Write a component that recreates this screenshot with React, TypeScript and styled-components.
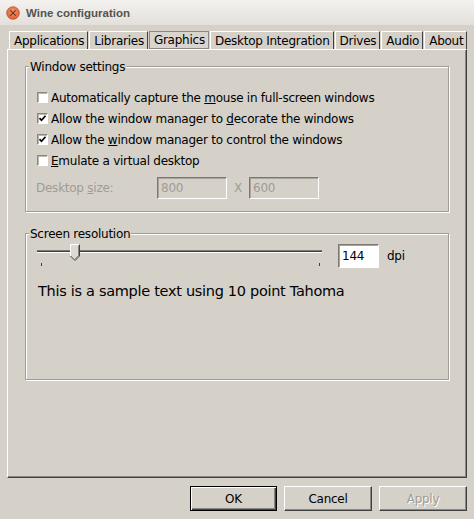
import React from "react";
import styled, { createGlobalStyle, css } from "styled-components";

const FONT = `"DejaVu Sans", "Liberation Sans", sans-serif`;
const BG = "#d5d1c9";

const GlobalStyle = createGlobalStyle`
  html, body { margin: 0; padding: 0; background: ${BG}; }
  body { font-family: ${FONT}; font-size: 12px; letter-spacing: -0.25px; color: #000; }
  * { box-sizing: border-box; }
`;

const Window = styled.div`
  width: 474px;
  height: 519px;
  display: flex;
  flex-direction: column;
  background: ${BG};
  overflow: hidden;
`;

const TitleBar = styled.div`
  height: 25px;
  flex: none;
  display: flex;
  align-items: center;
  padding-left: 6px;
  gap: 6px;
  background: linear-gradient(#f3f2ef, #e3e0da);
`;

const TitleText = styled.span`
  font-family: "Liberation Sans", sans-serif;
  font-weight: bold;
  font-size: 11.5px;
  letter-spacing: 0;
  color: #55534e;
`;

const Content = styled.div`
  padding: 6px 7px 0 7px;
  display: flex;
  flex-direction: column;
`;

const TabStrip = styled.div`
  display: flex;
  height: 18px;
  padding-left: 2px;
`;

const Tab = styled.div<{ $active?: boolean }>`
  display: flex;
  align-items: center;
  padding: 0 3px 0 4px;
  margin-right: 1px;
  white-space: nowrap;
  border-top: 1px solid #fff;
  border-left: 1px solid #fff;
  border-right: 1px solid #404040;
  ${(p) =>
    p.$active &&
    css`
      border: 1px solid #8c8981;
      background: #d9d5ce;
    `}
`;

const Panel = styled.div`
  height: 429px;
  border: 1px solid;
  border-color: #fff #404040 #404040 #fff;
  box-shadow: inset -1px -1px 0 #8a877f;
  padding: 16px 17px 0 17px;
  display: flex;
  flex-direction: column;
  gap: 21px;
`;

const Group = styled.div<{ $h: number; $pt: number }>`
  position: relative;
  height: ${(p) => p.$h}px;
  border: 1px solid #a19d95;
  box-shadow: inset 1px 1px 0 #fff, 1px 1px 0 #fff;
  padding-top: ${(p) => p.$pt}px;
  display: flex;
  flex-direction: column;
`;

const Legend = styled.span`
  position: absolute;
  top: -7px;
  left: 3px;
  padding: 0 1px;
  line-height: 14px;
  background: ${BG};
`;

const CheckRow = styled.label`
  height: 21px;
  display: flex;
  align-items: center;
  padding-left: 11px;
  gap: 3px;
  white-space: nowrap;
`;

const Box = styled.span`
  width: 11px;
  height: 11px;
  flex: none;
  background: #fff;
  border: 1px solid;
  border-color: #8a877f #fff #fff #8a877f;
  box-shadow: inset 1px 1px 0 #b9b6ae;
  display: flex;
  align-items: center;
  justify-content: center;
`;

const Key = styled.span`
  text-decoration: underline;
`;

const SizeRow = styled.div`
  margin-top: 6px;
  height: 22px;
  display: flex;
  align-items: center;
  padding-left: 10px;
  color: #9f9c94;
`;

const SizeLabel = styled.span`
  width: 121px;
`;

const Field = styled.div<{ $w: number; $white?: boolean }>`
  width: ${(p) => p.$w}px;
  height: ${(p) => (p.$white ? 24 : 22)}px;
  border: 1px solid;
  border-color: #7b7870 #fff #fff #7b7870;
  box-shadow: inset 1px 1px 0 #a8a59d;
  background: ${(p) => (p.$white ? "#fff" : BG)};
  color: ${(p) => (p.$white ? "#000" : "#9f9c94")};
  padding-left: 3px;
  display: flex;
  align-items: center;
`;

const Times = styled.span`
  width: 22px;
  text-align: center;
`;

const SliderRow = styled.div`
  height: 26px;
  display: flex;
  align-items: center;
  padding-left: 9px;
`;

const SliderSvg = styled.svg`
  flex: none;
  margin-right: 13px;
`;

const Unit = styled.span`
  margin-left: 8px;
`;

const Sample = styled.div`
  margin-top: 12px;
  padding-left: 12px;
  line-height: 20px;
  font-size: 14.5px;
  letter-spacing: -0.3px;
`;

const Footer = styled.div`
  margin-top: 8px;
  display: flex;
  justify-content: flex-end;
  gap: 7px;
`;

const Button = styled.div<{ $default?: boolean; $disabled?: boolean }>`
  width: ${(p) => (p.$default ? 87 : 88)}px;
  height: 25px;
  display: flex;
  align-items: center;
  justify-content: center;
  border: 1px solid;
  border-color: #fff #404040 #404040 #fff;
  box-shadow: inset -1px -1px 0 #8a877f;
  ${(p) =>
    p.$default &&
    css`
      border: 1px solid #000;
      box-shadow: inset 1px 1px 0 #fff, inset -1px -1px 0 #404040,
        inset -2px -2px 0 #8a877f;
    `}
  ${(p) =>
    p.$disabled &&
    css`
      color: #a09d95;
      text-shadow: 1px 1px 0 #fff;
    `}
`;

const CloseIcon = () => (
  <svg width="14" height="14" viewBox="0 0 14 14">
    <defs>
      <radialGradient id="cg" cx="50%" cy="40%" r="60%">
        <stop offset="0%" stopColor="#f59a72" />
        <stop offset="100%" stopColor="#de5a2e" />
      </radialGradient>
    </defs>
    <circle cx="7" cy="7" r="6.3" fill="url(#cg)" stroke="#c0552f" strokeWidth="0.8" />
    <path d="M4.6 4.6 L9.4 9.4 M9.4 4.6 L4.6 9.4" stroke="#6b3a27" strokeWidth="1.2" strokeLinecap="round" />
  </svg>
);

const Check = () => (
  <svg width="9" height="9" viewBox="0 0 9 9">
    <path d="M1.5 4.2 L3.5 6.3 L7.5 1.8" fill="none" stroke="#000" strokeWidth="1.7" />
  </svg>
);

const Slider = () => (
  <SliderSvg width="290" height="26" viewBox="0 0 290 26">
    <rect x="2" y="7" width="285" height="1" fill="#7d7a73" />
    <rect x="2" y="8" width="285" height="1" fill="#404040" />
    <rect x="2" y="9" width="285" height="1" fill="#fff" />
    <rect x="6" y="20" width="1" height="3" fill="#404040" />
    <rect x="284" y="20" width="1" height="3" fill="#404040" />
    <polygon points="35,1 45,1 45,13 40,18 35,13" fill="#dcd9d3" />
    <polyline points="35.5,13 35.5,1.5 44.5,1.5" fill="none" stroke="#fff" strokeWidth="1" />
    <polyline points="44.5,1.5 44.5,13 40,17.5 35.5,13" fill="none" stroke="#404040" strokeWidth="1" />
    <polyline points="43.5,2.5 43.5,12.6 40,16" fill="none" stroke="#8a877f" strokeWidth="1" />
  </SliderSvg>
);

const tabs = [
  "Applications",
  "Libraries",
  "Graphics",
  "Desktop Integration",
  "Drives",
  "Audio",
  "About",
];

export default function App() {
  return (
    <>
      <GlobalStyle />
      <Window>
        <TitleBar>
          <CloseIcon />
          <TitleText>Wine configuration</TitleText>
        </TitleBar>
        <Content>
          <TabStrip>
            {tabs.map((t) => (
              <Tab key={t} $active={t === "Graphics"}>
                {t}
              </Tab>
            ))}
          </TabStrip>
          <Panel>
            <Group $h={146} $pt={20}>
              <Legend>Window settings</Legend>
              <CheckRow>
                <Box />
                <span>
                  Automatically capture the <Key>m</Key>ouse in full-screen windows
                </span>
              </CheckRow>
              <CheckRow>
                <Box>
                  <Check />
                </Box>
                <span>
                  Allow the window manager to <Key>d</Key>ecorate the windows
                </span>
              </CheckRow>
              <CheckRow>
                <Box>
                  <Check />
                </Box>
                <span>
                  Allow the <Key>w</Key>indow manager to control the windows
                </span>
              </CheckRow>
              <CheckRow>
                <Box />
                <span>
                  <Key>E</Key>mulate a virtual desktop
                </span>
              </CheckRow>
              <SizeRow>
                <SizeLabel>
                  Desktop <Key>s</Key>ize:
                </SizeLabel>
                <Field $w={70}>800</Field>
                <Times>X</Times>
                <Field $w={70}>600</Field>
              </SizeRow>
            </Group>
            <Group $h={147} $pt={9}>
              <Legend>Screen resolution</Legend>
              <SliderRow>
                <Slider />
                <Field $w={41} $white>
                  144
                </Field>
                <Unit>dpi</Unit>
              </SliderRow>
              <Sample>This is a sample text using 10 point Tahoma</Sample>
            </Group>
          </Panel>
          <Footer>
            <Button $default>OK</Button>
            <Button>Cancel</Button>
            <Button $disabled>Apply</Button>
          </Footer>
        </Content>
      </Window>
    </>
  );
}
